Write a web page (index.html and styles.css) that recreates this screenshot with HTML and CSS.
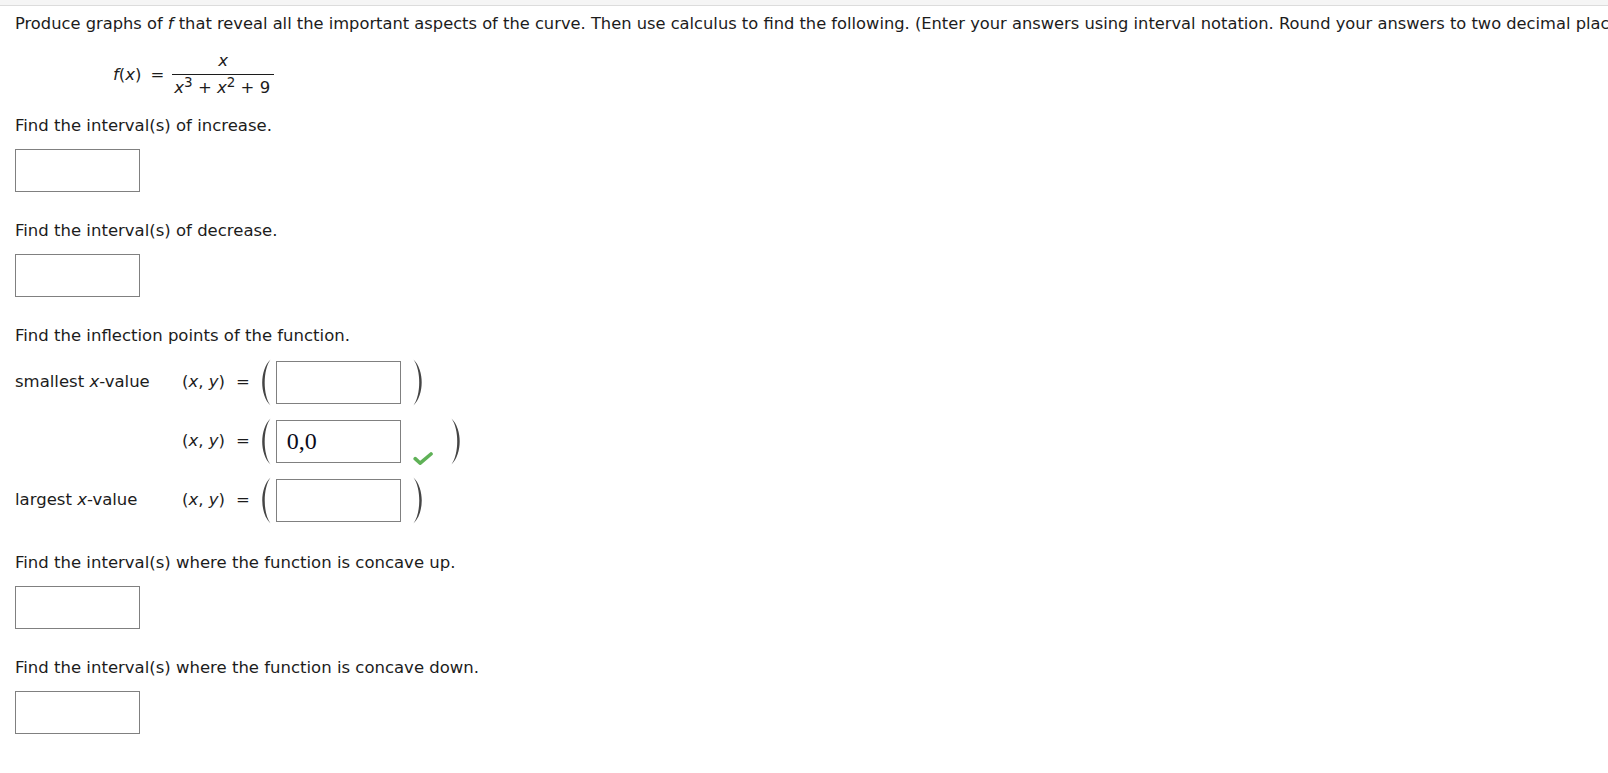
FILE: index.html
```html
<!DOCTYPE html>
<html>
<head>
<meta charset="utf-8">
<link rel="stylesheet" href="styles.css">
</head>
<body>
<div class="topbar"></div>
<div class="page">
  <p class="intro">Produce graphs of <i>f</i> that reveal all the important aspects of the curve. Then use calculus to find the following. (Enter your answers using interval notation. Round your answers to two decimal places.)</p>

  <div class="formula">
    <span class="fx"><i>f</i>(<i>x</i>)</span>
    <span class="eq">=</span>
    <span class="frac">
      <span class="num"><i>x</i></span>
      <span class="den"><i>x</i><sup>3</sup> + <i>x</i><sup>2</sup> + 9</span>
    </span>
  </div>

  <p class="q">Find the interval(s) of increase.</p>
  <div class="box"></div>

  <p class="q">Find the interval(s) of decrease.</p>
  <div class="box"></div>

  <p class="q">Find the inflection points of the function.</p>
  <div class="rows">
    <div class="row">
      <span class="label">smallest <i>x</i>-value</span>
      <span class="xy">(<i>x</i>, <i>y</i>)</span><span class="eq2">=</span>
      <svg class="paren lp" viewBox="0 0 12 47" width="12" height="47"><path d="M11.5 0.5 C 0.5 11, 0.5 36, 11.5 46.5 C 3.8 36, 3.8 11, 11.5 0.5 Z"/></svg>
      <div class="box inrow"></div>
      <svg class="paren rp" viewBox="0 0 12 47" width="12" height="47"><path d="M0.5 0.5 C 11.5 11, 11.5 36, 0.5 46.5 C 8.2 36, 8.2 11, 0.5 0.5 Z"/></svg>
    </div>
    <div class="row">
      <span class="label"></span>
      <span class="xy">(<i>x</i>, <i>y</i>)</span><span class="eq2">=</span>
      <svg class="paren lp" viewBox="0 0 12 47" width="12" height="47"><path d="M11.5 0.5 C 0.5 11, 0.5 36, 11.5 46.5 C 3.8 36, 3.8 11, 11.5 0.5 Z"/></svg>
      <div class="box inrow filled">0,0</div>
      <svg class="check" viewBox="0 0 20 13" width="20" height="13"><path d="M2.2 6.6 L7.2 11.2 L18 2" fill="none" stroke="#5fb157" stroke-width="3.6" stroke-linecap="round" stroke-linejoin="round"/></svg>
      <svg class="paren rp2" viewBox="0 0 12 47" width="12" height="47"><path d="M0.5 0.5 C 11.5 11, 11.5 36, 0.5 46.5 C 8.2 36, 8.2 11, 0.5 0.5 Z"/></svg>
    </div>
    <div class="row">
      <span class="label">largest <i>x</i>-value</span>
      <span class="xy">(<i>x</i>, <i>y</i>)</span><span class="eq2">=</span>
      <svg class="paren lp" viewBox="0 0 12 47" width="12" height="47"><path d="M11.5 0.5 C 0.5 11, 0.5 36, 11.5 46.5 C 3.8 36, 3.8 11, 11.5 0.5 Z"/></svg>
      <div class="box inrow"></div>
      <svg class="paren rp" viewBox="0 0 12 47" width="12" height="47"><path d="M0.5 0.5 C 11.5 11, 11.5 36, 0.5 46.5 C 8.2 36, 8.2 11, 0.5 0.5 Z"/></svg>
    </div>
  </div>

  <p class="q after-rows">Find the interval(s) where the function is concave up.</p>
  <div class="box"></div>

  <p class="q">Find the interval(s) where the function is concave down.</p>
  <div class="box"></div>
</div>
</body>
</html>
```

FILE: styles.css
```css
html, body {
  margin: 0;
  padding: 0;
  background: #ffffff;
  overflow: hidden;
}

body {
  font-family: "DejaVu Sans", Verdana, sans-serif;
  font-size: 16.5px;
  line-height: 20px;
  color: #1c1c1c;
}

.topbar {
  height: 5px;
  background: #f5f5f5;
  border-bottom: 1px solid #dcdcdc;
}

.page {
  padding-left: 15px;
}

.intro {
  margin: 8px 0 0 0;
  white-space: nowrap;
  font-size: 16.3px;
}

.formula {
  display: flex;
  align-items: center;
  margin-top: 17px;
  padding-left: 98px;
}

.fx {
  margin-right: 9px;
}

.eq {
  margin-right: 8px;
}

.frac {
  display: inline-flex;
  flex-direction: column;
  align-items: center;
}

.num {
  padding-bottom: 3px;
  text-align: center;
}

.den {
  border-top: 1px solid #1c1c1c;
  padding: 3px 4px 0 2px;
}

sup {
  font-size: 13.5px;
  line-height: 0;
  vertical-align: 6px;
}

.q {
  margin: 29px 0 0 0;
}

.formula + .q {
  margin-top: 18px;
}

.box {
  box-sizing: border-box;
  width: 125px;
  height: 43px;
  border: 1px solid #808080;
  background: #ffffff;
  margin-top: 13px;
}

.rows {
  margin-top: 12.5px;
  display: flex;
  flex-direction: column;
  gap: 12px;
}

.row {
  display: flex;
  align-items: center;
  height: 47px;
}

.label {
  width: 167px;
  flex: none;
}

.xy {
  flex: none;
}

.eq2 {
  margin-left: 11px;
  flex: none;
}

.paren {
  flex: none;
  fill: #454545;
}

.lp {
  margin-left: 9px;
}

.box.inrow {
  margin: 0 0 0 5px;
  flex: none;
}

.rp {
  margin-left: 12px;
}

.filled {
  font-family: "Liberation Serif", "Times New Roman", serif;
  font-size: 24px;
  line-height: 41px;
  padding-left: 10px;
  color: #0a0a1a;
}

.check {
  flex: none;
  align-self: flex-end;
  margin-left: 12px;
}

.rp2 {
  margin-left: 18px;
}

.q.after-rows {
  margin-top: 29px;
}
```
